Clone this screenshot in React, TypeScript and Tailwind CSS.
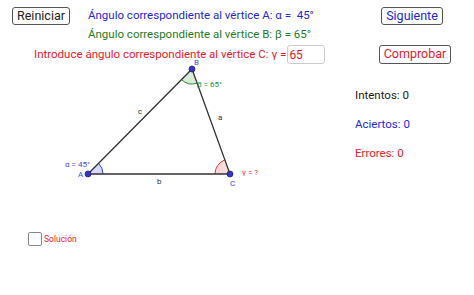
import React from 'react'

const font = { fontFamily: 'Roboto, "Liberation Sans", sans-serif' }

function Triangle() {
  // vertices in svg coordinates (svg starts at page y = 64)
  const A = { x: 88, y: 110 }
  const B = { x: 192, y: 5 }
  const C = { x: 230, y: 110 }
  return (
    <svg width="340" height="140" viewBox="0 0 340 140" className="block overflow-visible">
      {/* angle sectors */}
      <path d={`M${A.x} ${A.y} L${A.x + 15} ${A.y} A15 15 0 0 0 ${A.x + 10.6} ${A.y - 10.6} Z`} fill="#d9d9fb" />
      <path d={`M${A.x + 15} ${A.y} A15 15 0 0 0 ${A.x + 10.6} ${A.y - 10.6}`} fill="none" stroke="#3b3bdc" strokeWidth="1" />
      <path d={`M${B.x} ${B.y} L${B.x - 10.5} ${B.y + 10.6} A15 15 0 0 0 ${B.x + 5.1} ${B.y + 14.1} Z`} fill="#d6ecd6" />
      <path d={`M${B.x - 10.5} ${B.y + 10.6} A15 15 0 0 0 ${B.x + 5.1} ${B.y + 14.1}`} fill="none" stroke="#2e8b2e" strokeWidth="1" />
      <path d={`M${C.x} ${C.y} L${C.x - 15} ${C.y} A15 15 0 0 1 ${C.x - 5.1} ${C.y - 14.1} Z`} fill="#fbdada" />
      <path d={`M${C.x - 15} ${C.y} A15 15 0 0 1 ${C.x - 5.1} ${C.y - 14.1}`} fill="none" stroke="#e0303a" strokeWidth="1" />
      {/* sides */}
      <polygon points={`${A.x},${A.y} ${B.x},${B.y} ${C.x},${C.y}`} fill="none" stroke="#333" strokeWidth="1.3" />
      {/* points */}
      {[A, B, C].map((p, i) => (
        <circle key={i} cx={p.x} cy={p.y} r="3" fill="#3535c8" stroke="#1a1a7a" strokeWidth="0.7" />
      ))}
      <g style={font} fontSize="8">
        <text x="78" y="113" fill="#4a4ae0">A</text>
        <text x="194" y="1" fill="#4a4ae0">B</text>
        <text x="230" y="122" fill="#4a4ae0">C</text>
        <text x="138" y="50" fill="#333">c</text>
        <text x="218" y="56" fill="#333">a</text>
        <text x="157" y="120" fill="#333">b</text>
        <text x="65" y="103" fill="#4a4ae0">α = 45°</text>
        <text x="197" y="23" fill="#2e8b2e">β = 65°</text>
        <text x="242" y="111" fill="#e0303a">γ = ?</text>
      </g>
    </svg>
  )
}

export default function App() {
  return (
    <div className="relative w-[474px] h-[295px] bg-white overflow-hidden text-[11.5px]" style={font}>
      <div className="flex items-center h-[18px] mt-[7px]">
        <button className="ml-[12px] w-[58px] h-[18px] border border-[#555] rounded-[3px] bg-white text-[12.5px] text-[#222] leading-none">
          Reiniciar
        </button>
        <span className="ml-[18px] text-[#2626d9]">Ángulo correspondiente al vértice A: α =&nbsp; 45°</span>
        <button className="ml-auto mr-[31px] w-[62px] h-[18px] border border-[#555] rounded-[3px] bg-white text-[12.5px] text-[#2626d9] leading-none">
          Siguiente
        </button>
      </div>
      <div className="ml-[88px] mt-[2px] h-[16px] flex items-center text-[#1f7a1f]">
        Ángulo correspondiente al vértice B: β = 65°
      </div>
      <div className="flex items-center mt-[2px] h-[19px]">
        <span className="ml-[34px] text-[#e8202a]">Introduce ángulo correspondiente al vértice C: γ =</span>
        <span className="ml-[1px] w-[38px] h-[19px] border border-[#ccc] rounded-[3px] text-[#e8202a] text-[12px] flex items-center pl-[1px]">
          65
        </span>
        <button className="ml-auto mr-[23px] w-[72px] h-[19px] border border-[#555] rounded-[3px] bg-white text-[12.5px] text-[#e8202a] leading-none">
          Comprobar
        </button>
      </div>
      <div className="flex">
        <Triangle />
        <div className="ml-[15px] mt-[24px] flex flex-col gap-[15px] text-[11.5px] leading-[14px]">
          <span className="text-[#222]">Intentos: 0</span>
          <span className="text-[#2626d9]">Aciertos: 0</span>
          <span className="text-[#e8202a]">Errores: 0</span>
        </div>
      </div>
      <div className="flex items-center mt-[28px] ml-[28px]">
        <span className="w-[14px] h-[14px] border border-[#888] rounded-[2px] bg-white" />
        <span className="ml-[2px] text-[8.5px] text-[#e8202a]">Solución</span>
      </div>
    </div>
  )
}
